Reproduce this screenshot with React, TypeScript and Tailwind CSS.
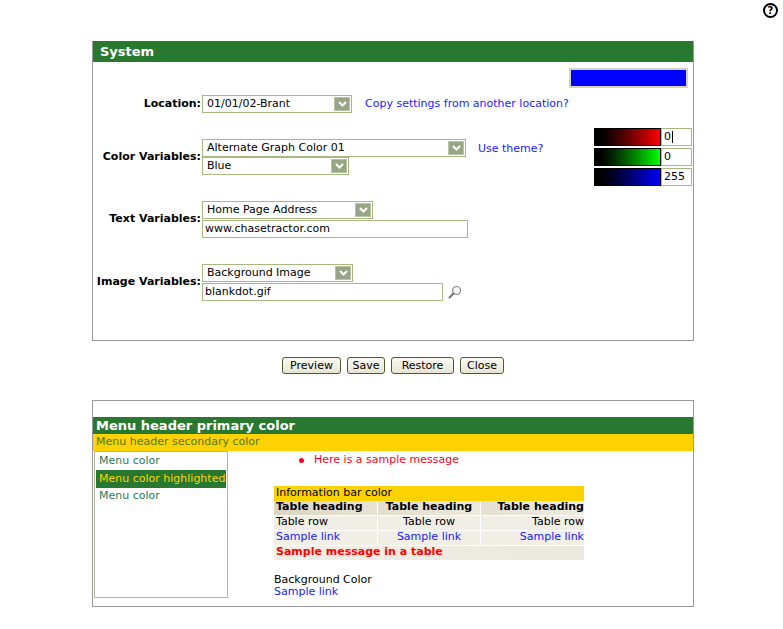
import React from "react"

const FONT = { fontFamily: '"DejaVu Sans", Verdana, sans-serif' }

function Arrow() {
  return (
    <span className="flex h-[14px] w-[16px] items-center justify-center bg-[#98a685] border border-[#b7c3a4]">
      <svg width="9" height="6" viewBox="0 0 9 6">
        <path d="M1 1 L4.5 4.5 L8 1" fill="none" stroke="#fff" strokeWidth="2" />
      </svg>
    </span>
  )
}

function Select({ value, w }: { value: string; w: string }) {
  return (
    <div className={"flex h-[18px] items-center justify-between border border-[#a9b883] bg-white pl-[4px] pr-[1px] " + w}>
      <span className="text-[11px] text-black">{value}</span>
      <Arrow />
    </div>
  )
}

function Input({ value, w }: { value: string; w: string }) {
  return (
    <div className={"flex h-[18px] items-center border border-[#a9b883] bg-white pl-[2px] " + w}>
      <span className="text-[11px] text-black">{value}</span>
    </div>
  )
}

function Slider({ grad, val, caret }: { grad: string; val: string; caret?: boolean }) {
  return (
    <div className="flex h-[18px]">
      <div className={"w-[67px] border border-black " + grad} />
      <div className="flex w-[31px] items-center border border-[#a9b883] bg-white pl-[2px]">
        <span className="text-[11px] text-black">{val}</span>
        {caret && <span className="ml-[1px] h-[12px] w-px bg-black" />}
      </div>
    </div>
  )
}

function Button({ label, w }: { label: string; w: string }) {
  return (
    <button className={"h-[17px] rounded-[3px] border border-[#4c5a2c] bg-gradient-to-b from-[#fbfaf3] to-[#e7e4d3] text-[11px] text-black leading-none " + w}>
      {label}
    </button>
  )
}

export default function App() {
  return (
    <div className="relative min-h-[629px] w-[783px] bg-white" style={FONT}>
      {/* help */}
      <div className="absolute left-[763px] top-[3px] flex h-[15px] w-[15px] items-center justify-center rounded-full border-2 border-black text-[10px] font-bold leading-none text-black">
        ?
      </div>

      <div className="pl-[92px] pt-[41px]">
        {/* System panel */}
        <div className="h-[300px] w-[602px] border border-t-0 border-[#999]">
          <div className="flex h-[21px] items-center bg-[#28792f] pl-[7px] text-[13px] font-bold text-white">System</div>

          <div className="flex justify-end pr-[5px] pt-[6px]">
            <div className="h-[20px] w-[119px] border-2 border-[#d6d2bc] bg-[#0000ff]" />
          </div>

          <div className="mt-[7px] flex items-center">
            <div className="w-[109px] pr-[1px] text-right text-[11px] font-bold">Location:</div>
            <Select value="01/01/02-Brant" w="w-[150px]" />
            <span className="ml-[13px] text-[11px] text-[#1a1aff]">Copy settings from another location?</span>
          </div>

          <div className="mt-[15px] flex items-center">
            <div className="w-[109px] pr-[1px] text-right text-[11px] font-bold">Color Variables:</div>
            <div className="flex flex-col">
              <Select value="Alternate Graph Color 01" w="w-[264px]" />
              <Select value="Blue" w="w-[147px]" />
            </div>
            <span className="mb-[16px] ml-[12px] text-[11px] text-[#1a1aff]">Use theme?</span>
            <div className="ml-auto mr-[1px] flex flex-col gap-[2px]">
              <Slider grad="bg-gradient-to-r from-black to-[#ff0000]" val="0" caret />
              <Slider grad="bg-gradient-to-r from-black to-[#00ff00]" val="0" />
              <Slider grad="bg-gradient-to-r from-black to-[#0000ff]" val="255" />
            </div>
          </div>

          <div className="mt-[15px] flex items-center">
            <div className="w-[109px] pr-[1px] text-right text-[11px] font-bold">Text Variables:</div>
            <div className="flex flex-col gap-[1px]">
              <Select value="Home Page Address" w="w-[171px]" />
              <Input value="www.chasetractor.com" w="w-[266px]" />
            </div>
          </div>

          <div className="mt-[26px] flex items-center">
            <div className="w-[109px] pr-[1px] text-right text-[11px] font-bold">Image Variables:</div>
            <div className="flex flex-col gap-[1px]">
              <Select value="Background Image" w="w-[151px]" />
              <div className="flex items-center">
                <Input value="blankdot.gif" w="w-[241px]" />
                <svg className="ml-[5px]" width="14" height="14" viewBox="0 0 14 14">
                  <circle cx="8.5" cy="5.5" r="4" fill="#f4f4f4" stroke="#8a8a8a" strokeWidth="1.2" />
                  <path d="M5.6 8.4 L1.5 12.5" stroke="#6e6e6e" strokeWidth="2" strokeLinecap="round" />
                </svg>
              </div>
            </div>
          </div>
        </div>

        {/* buttons */}
        <div className="mt-[16px] flex w-[602px] justify-center gap-[6px]">
          <Button label="Preview" w="w-[59px]" />
          <Button label="Save" w="w-[38px]" />
          <Button label="Restore" w="w-[63px]" />
          <Button label="Close" w="w-[44px]" />
        </div>

        {/* Preview panel */}
        <div className="mt-[26px] h-[207px] w-[602px] border border-[#999] pt-[16px]">
          <div className="flex h-[17px] items-center bg-[#28792f] pl-[3px] text-[13px] font-bold leading-none text-white">
            Menu header primary color
          </div>
          <div className="flex h-[17px] items-center bg-[#fcd200] pl-[3px] text-[11px] text-[#4e7a1f]">
            Menu header secondary color
          </div>

          <div className="flex">
            <div className="ml-px w-[134px] border border-[#b5b59c] bg-white p-px">
              <div className="flex h-[17px] items-center pl-[3px] text-[11px] text-[#2d7a55]">Menu color</div>
              <div className="flex h-[18px] items-center bg-[#28792f] pl-[3px] text-[11px] text-[#fcd200]">Menu color highlighted</div>
              <div className="flex h-[17px] items-center pl-[3px] text-[11px] text-[#2d7a55]">Menu color</div>
            </div>

            <div className="ml-[46px] flex flex-col">
              <div className="ml-[25px] mt-[1px] flex items-center">
                <span className="h-[5px] w-[5px] rounded-full bg-[#ff0022]" />
                <span className="ml-[10px] text-[11px] text-[#ff0022]">Here is a sample message</span>
              </div>

              <div className="mt-[17px] w-[310px] text-[11px]">
                <div className="flex h-[15px] items-center bg-[#fcd200] pl-[2px] text-black">Information bar color</div>
                <div className="grid grid-cols-3 gap-px bg-white">
                  <div className="flex h-[14px] items-center bg-gradient-to-r from-[#dcd5c2] to-[#e8e3d6] pl-[2px] font-bold">Table heading</div>
                  <div className="flex h-[14px] items-center justify-center bg-gradient-to-r from-[#e3ddcd] to-[#ece8dc] font-bold">Table heading</div>
                  <div className="flex h-[14px] items-center justify-end bg-gradient-to-r from-[#e6e0d2] to-[#eeebe1] font-bold">Table heading</div>
                  <div className="flex h-[14px] items-center bg-[#f1eee6] pl-[2px]">Table row</div>
                  <div className="flex h-[14px] items-center justify-center bg-[#f1eee6]">Table row</div>
                  <div className="flex h-[14px] items-center justify-end bg-[#f1eee6]">Table row</div>
                  <div className="flex h-[14px] items-center bg-[#f1eee6] pl-[2px] text-[#1a1aff]">Sample link</div>
                  <div className="flex h-[14px] items-center justify-center bg-[#f1eee6] text-[#1a1aff]">Sample link</div>
                  <div className="flex h-[14px] items-center justify-end bg-[#f1eee6] text-[#1a1aff]">Sample link</div>
                </div>
                <div className="mt-px flex h-[14px] items-center bg-gradient-to-r from-[#f1eee6] to-[#ebe8de] pl-[2px] font-bold text-[#ff0000]">
                  Sample message in a table
                </div>
              </div>

              <div className="mt-[14px] text-[11px] leading-[12px] text-black">Background Color</div>
              <div className="text-[11px] leading-[12px] text-[#1a1aff]">Sample link</div>
            </div>
          </div>
        </div>
      </div>
    </div>
  )
}
